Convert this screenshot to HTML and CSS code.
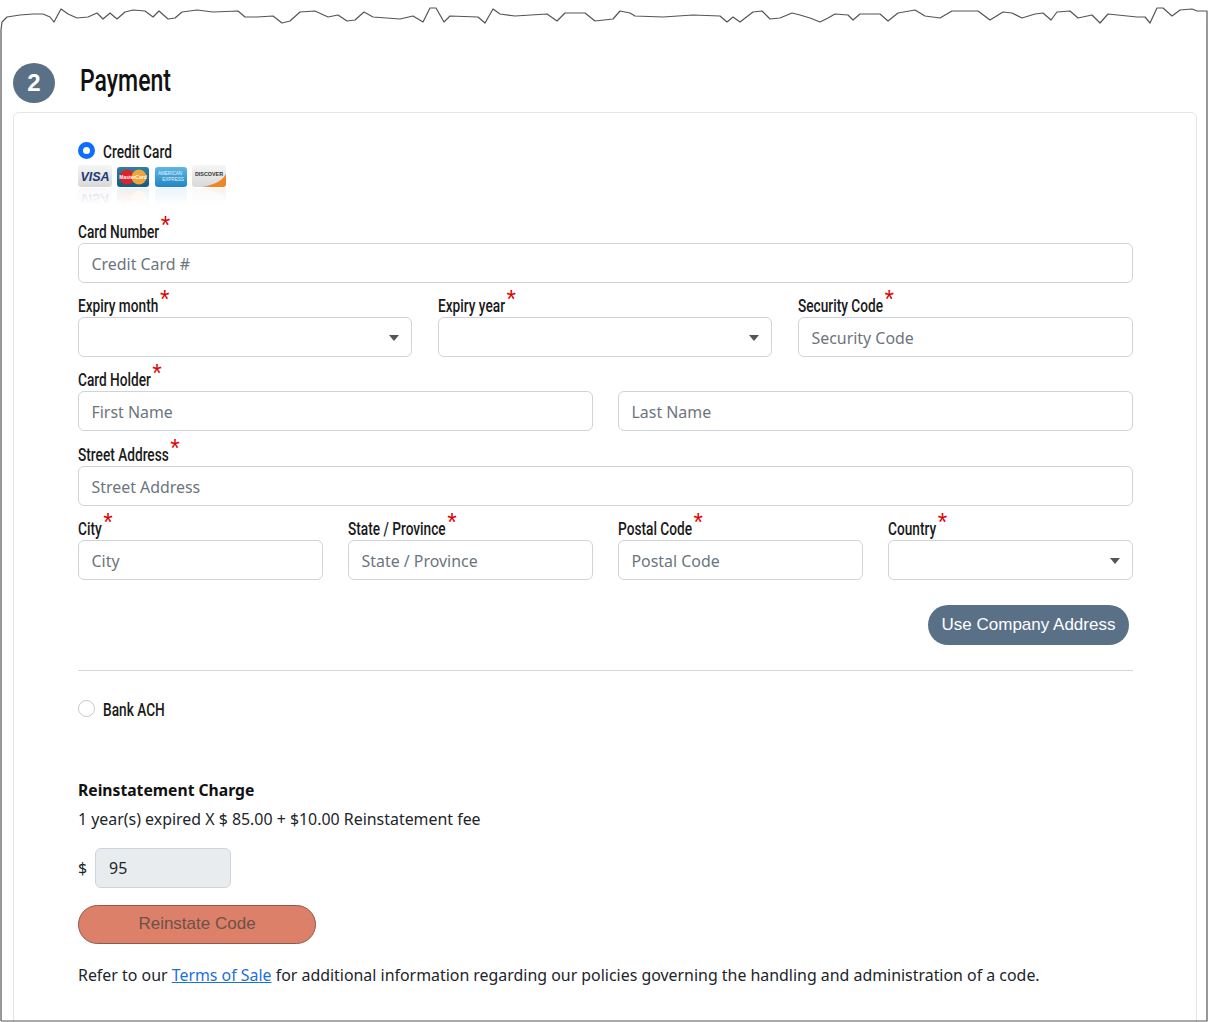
FILE: index.html
```html
<!DOCTYPE html>
<html lang="en">
<head>
    <meta charset="UTF-8">
    <meta name="viewport" content="width=device-width, initial-scale=1.0">
    <title>Payment</title>
    <link rel="stylesheet" href="styles.css">
</head>
<body>
    <!-- Torn paper edge and frame -->
    <svg class="torn-edge" width="1210" height="1022" viewBox="0 0 1210 1022">
        <polyline fill="none" stroke="#555" stroke-width="1.2" stroke-linejoin="round" points="1,1021 1,30 2,22 7,17 20,15 33,14 43,14 50,17 54,22 61,9 68,14 77,18 88,17 97,13 103,19 110,13 117,19 125,12 133,10 145,11 153,17 159,11 168,19 175,18 182,12 197,10 213,12 238,11 245,17 257,17 273,16 282,23 290,21 300,12 315,11 328,17 338,15 347,21 355,20 364,12 373,17 400,19 413,16 423,22 430,8 436,8 444,22 450,16 478,17 485,23 493,9 500,14 515,16 547,14 557,21 565,13 585,13 595,21 613,19 620,11 630,13 635,16 663,17 693,15 720,16 727,22 733,17 740,22 753,12 762,11 770,19 780,18 792,13 800,15 810,18 820,22 828,18 835,14 848,15 853,20 860,14 880,14 888,21 898,13 915,10 925,16 940,18 952,11 978,11 990,20 1003,12 1012,13 1022,18 1035,14 1043,13 1051,20 1057,12 1070,11 1078,18 1092,15 1100,23 1108,14 1137,17 1145,17 1150,23 1157,8 1163,8 1172,16 1180,10 1192,9 1197,11 1207,11 1207,1021 1,1021"/>
    </svg>

    <div class="page">
        <div class="step-head">
            <span class="step-num">2</span>
            <h2>Payment</h2>
        </div>

        <div class="card">
            <label class="radio-row">
                <input type="radio" name="pay" checked>
                <span>Credit Card</span>
            </label>

            <!-- Card logos with their reflection -->
            <svg class="card-logos" width="150" height="40" viewBox="0 0 150 40">
                <defs>
                    <linearGradient id="fade" x1="0" y1="0" x2="0" y2="1">
                        <stop offset="0" stop-color="#fff" stop-opacity="0.55"/>
                        <stop offset="1" stop-color="#fff" stop-opacity="1"/>
                    </linearGradient>
                    <linearGradient id="amex" x1="0" y1="0" x2="0" y2="1">
                        <stop offset="0" stop-color="#5db7e6"/>
                        <stop offset="1" stop-color="#2186c4"/>
                    </linearGradient>
                    <linearGradient id="mc" x1="0" y1="0" x2="0" y2="1">
                        <stop offset="0" stop-color="#2f7fa6"/>
                        <stop offset="1" stop-color="#155a82"/>
                    </linearGradient>
                    <linearGradient id="grey" x1="0" y1="0" x2="0" y2="1">
                        <stop offset="0" stop-color="#f6f6f6"/>
                        <stop offset="1" stop-color="#d8d8d8"/>
                    </linearGradient>
                </defs>
                <rect x="0" y="0" width="34" height="22" rx="3" fill="url(#grey)"/>
                <text x="17" y="16" class="visa-text">VISA</text>
                <rect x="39" y="2" width="32" height="20" rx="3" fill="url(#mc)"/>
                <circle cx="49" cy="12" r="7.5" fill="#d9252a"/>
                <circle cx="61" cy="12" r="7.5" fill="#f0a53a"/>
                <text x="55" y="14" class="mc-text">MasterCard</text>
                <rect x="77" y="2" width="32" height="20" rx="3" fill="url(#amex)"/>
                <text x="92" y="10" class="amex-text">AMERICAN</text>
                <text x="95" y="16" class="amex-text">EXPRESS</text>
                <rect x="114" y="0" width="34" height="22" rx="3" fill="url(#grey)"/>
                <path d="M148 9 V19 a3 3 0 0 1 -3 3 H124 C136 20 144 16 148 9 Z" fill="#ee8526"/>
                <text x="131" y="11" class="disc-text">DISCOVER</text>
                <g transform="translate(0 45) scale(1 -1)" opacity="0.45">
                    <rect x="0" y="1" width="34" height="21" rx="3" fill="#e4e4e4"/>
                    <text x="17" y="16" class="visa-text">VISA</text>
                    <rect x="39" y="2" width="32" height="20" rx="3" fill="#8fbdd2"/>
                    <circle cx="49" cy="12" r="7.5" fill="#e88"/>
                    <circle cx="61" cy="12" r="7.5" fill="#f3cf95"/>
                    <rect x="77" y="2" width="32" height="20" rx="3" fill="#9ccfeb"/>
                    <rect x="114" y="1" width="34" height="21" rx="3" fill="#e4e4e4"/>
                    <path d="M148 10 V19 a3 3 0 0 1 -3 3 H124 C136 20 144 16 148 10 Z" fill="#f4bd8c"/>
                </g>
                <rect x="0" y="23" width="150" height="17" fill="url(#fade)"/>
            </svg>

            <div class="row one">
                <div class="field">
                    <label>Card Number<sup>*</sup></label>
                    <input type="text" placeholder="Credit Card #">
                </div>
            </div>

            <div class="row three">
                <div class="field">
                    <label>Expiry month<sup>*</sup></label>
                    <div class="select-wrap"><select></select></div>
                </div>
                <div class="field">
                    <label>Expiry year<sup>*</sup></label>
                    <div class="select-wrap"><select></select></div>
                </div>
                <div class="field">
                    <label>Security Code<sup>*</sup></label>
                    <input type="text" placeholder="Security Code">
                </div>
            </div>

            <div class="row two">
                <div class="field">
                    <label>Card Holder<sup>*</sup></label>
                    <input type="text" placeholder="First Name">
                </div>
                <div class="field no-label">
                    <input type="text" placeholder="Last Name">
                </div>
            </div>

            <div class="row one">
                <div class="field">
                    <label>Street Address<sup>*</sup></label>
                    <input type="text" placeholder="Street Address">
                </div>
            </div>

            <div class="row four">
                <div class="field">
                    <label>City<sup>*</sup></label>
                    <input type="text" placeholder="City">
                </div>
                <div class="field">
                    <label>State / Province<sup>*</sup></label>
                    <input type="text" placeholder="State / Province">
                </div>
                <div class="field">
                    <label>Postal Code<sup>*</sup></label>
                    <input type="text" placeholder="Postal Code">
                </div>
                <div class="field">
                    <label>Country<sup>*</sup></label>
                    <div class="select-wrap"><select></select></div>
                </div>
            </div>

            <div class="address-btn-row">
                <button class="btn-company" type="button">Use Company Address</button>
            </div>

            <hr>

            <label class="radio-row bank">
                <input type="radio" name="pay">
                <span>Bank ACH</span>
            </label>

            <h4>Reinstatement Charge</h4>
            <p class="charge">1 year(s) expired X $ 85.00 + $10.00 Reinstatement fee</p>

            <div class="amount-row">
                <span>$</span>
                <input type="text" value="95" readonly>
            </div>

            <button class="btn-reinstate" type="button" disabled>Reinstate Code</button>

            <p class="terms">Refer to our <a href="#terms">Terms of Sale</a> for additional information regarding our policies governing the handling and administration of a code.</p>
        </div>
    </div>
</body>
</html>
```

FILE: styles.css
```css
:root {
    --slate: #5a7087;
    --border: #ced4da;
    --placeholder: #6c757d;
    --noir: #212529;
    --narrow: 0.72;
}

html, body {
    height: 1022px;
    overflow: hidden;
}

body {
    font-family: "Noto Sans", "Open Sans", sans-serif;
    font-size: 15.92px;
    margin: 0;
    background: #fff;
    color: var(--noir);
}

.torn-edge {
    position: absolute;
    top: 0;
    left: 0;
    pointer-events: none;
}

.page {
    padding: 62px 13px 0;
}

/* Step title */
.step-head {
    display: flex;
    align-items: center;
    height: 42px;
    margin-bottom: 8px;
}

.step-num {
    flex: none;
    width: 42px;
    height: 40px;
    border-radius: 50%;
    background: var(--slate);
    color: #fff;
    font-family: "Liberation Sans", Arial, sans-serif;
    font-weight: bold;
    font-size: 24px;
    line-height: 40px;
    text-align: center;
}

/* no condensed face installed, so the headings are squeezed */
.step-head h2 {
    margin: -6px 0 0 25px;
    font-family: Roboto, sans-serif;
    font-weight: 500;
    font-size: 32px;
    color: #111;
    transform: scaleX(var(--narrow));
    transform-origin: left;
}

/* Main card */
.card {
    height: 960px;
    box-sizing: border-box;
    padding: 27px 63px 0 64px;
    border: 1px solid #e3e5e8;
    border-radius: 6px;
}

.radio-row {
    display: flex;
    align-items: center;
    gap: 8px;
    height: 20px;
    font-family: Roboto, sans-serif;
    font-weight: 500;
    font-size: 19px;
    color: #1a1a1a;
}

.radio-row span {
    margin-top: 2px;
    transform: scaleX(var(--narrow));
    transform-origin: left;
}

input[type="radio"] {
    appearance: none;
    width: 17px;
    height: 17px;
    margin: 0;
    border: 1px solid #c4c8cc;
    border-radius: 50%;
    background: #fff;
}

input[type="radio"]:checked {
    border: 5px solid #0d6efd;
}

.card-logos {
    display: block;
    margin: 5px 0 3.4px;
}

.visa-text {
    font-family: "Liberation Sans", Arial, sans-serif;
    font-weight: bold;
    font-style: italic;
    font-size: 12.5px;
    text-anchor: middle;
    fill: #1a3a78;
}

.mc-text {
    font-family: "Liberation Sans", Arial, sans-serif;
    font-weight: bold;
    font-size: 5px;
    text-anchor: middle;
    fill: #fff;
}

.amex-text {
    font-family: "Liberation Sans", Arial, sans-serif;
    font-size: 4.6px;
    text-anchor: middle;
    fill: #e4f4fb;
}

.disc-text {
    font-family: "Liberation Sans", Arial, sans-serif;
    font-weight: bold;
    font-size: 5.4px;
    text-anchor: middle;
    fill: #333;
}

/* Form rows */
.row {
    display: grid;
    column-gap: 25px;
}

.one { grid-template-columns: 1fr; }
.two { grid-template-columns: repeat(2, 1fr); }
.three { grid-template-columns: 334px 334px 1fr; column-gap: 26px; }
.four { grid-template-columns: repeat(4, 1fr); }

.field {
    display: flex;
    flex-direction: column;
    height: 74.3px;
    box-sizing: border-box;
}

.no-label {
    padding-top: 34.3px;
}

.field label {
    align-self: flex-start;
    flex: none;
    height: 34.3px;
    box-sizing: border-box;
    padding-top: 11.5px;
    line-height: 24px;
    font-family: Roboto, sans-serif;
    font-weight: 500;
    font-size: 19px;
    color: #1a1a1a;
    white-space: nowrap;
    transform: scaleX(var(--narrow));
    transform-origin: left;
}

.field sup {
    display: inline-block;
    height: 10px;
    margin-left: 2px;
    vertical-align: 4px;
    line-height: 10px;
    color: #e00000;
    font-family: "Liberation Sans", Arial, sans-serif;
    font-weight: normal;
    font-size: 25px;
    transform: scaleX(1.35);
    transform-origin: left;
}

.field input, .select-wrap select {
    flex: none;
    width: 100%;
    height: 40px;
    box-sizing: border-box;
    padding: 2px 12.5px 0;
    border: 1px solid var(--border);
    border-radius: 6px;
    background: #fff;
    color: var(--noir);
    font: inherit;
    outline: none;
}

input::placeholder {
    color: var(--placeholder);
    opacity: 1;
}

.select-wrap {
    position: relative;
    flex: none;
}

.select-wrap select {
    display: block;
    appearance: none;
}

.select-wrap::after {
    content: "";
    position: absolute;
    top: 18px;
    right: 13px;
    border-left: 5.5px solid transparent;
    border-right: 5.5px solid transparent;
    border-top: 6px solid #555;
}

.address-btn-row {
    display: flex;
    justify-content: flex-end;
    padding: 25px 4px 0 0;
}

.btn-company {
    height: 40px;
    width: 201px;
    padding: 0;
    border: none;
    border-radius: 20px;
    background: var(--slate);
    color: #fff;
    font-family: "Liberation Sans", Arial, sans-serif;
    font-size: 17px;
}

hr {
    height: 1px;
    margin: 25px 0 28px;
    border: none;
    background: #d5d8da;
}

.bank {
    height: 20px;
}

h4 {
    margin: 59px 0 0;
    font-size: 15.7px;
    line-height: 24px;
    font-weight: bold;
    color: #111;
}

.charge {
    margin: 5px 0 0;
    line-height: 24px;
}

.amount-row {
    display: flex;
    align-items: center;
    gap: 8px;
    margin-top: 17px;
}

.amount-row input {
    width: 136px;
    height: 40px;
    box-sizing: border-box;
    padding: 0 13px;
    border: 1px solid var(--border);
    border-radius: 6px;
    background: #e9ecef;
    color: var(--noir);
    font: inherit;
    outline: none;
}

.btn-reinstate {
    display: block;
    width: 238px;
    height: 39px;
    margin-top: 17px;
    padding: 0;
    border: 1px solid #8f5a4c;
    border-radius: 20px;
    background: #dc806a;
    color: #6e5148;
    font-family: "Liberation Sans", Arial, sans-serif;
    font-size: 17px;
}

.terms {
    margin: 19px 0 0;
    line-height: 24px;
}

.terms a {
    color: #1d6fd8;
}
```
